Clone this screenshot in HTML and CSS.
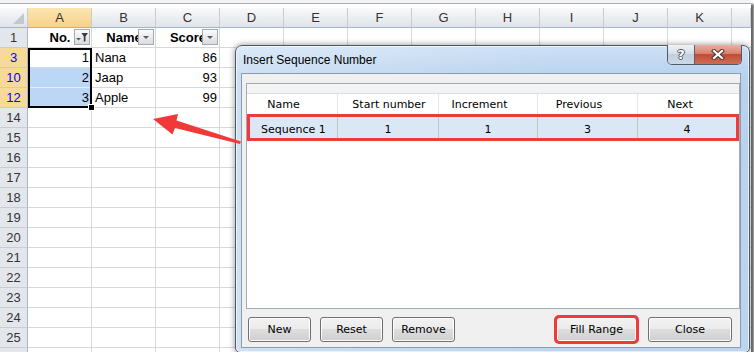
FILE: index.html
```html
<!DOCTYPE html>
<html lang="en">
<head>
    <meta charset="UTF-8">
    <title>Insert Sequence Number</title>
    <link rel="stylesheet" href="styles.css">
</head>
<body>
    <div class="screen">
        <div class="formula-edge"></div>

        <div class="col-heads">
            <div class="corner"></div>
            <div class="ch sel">A</div>
            <div class="ch">B</div>
            <div class="ch">C</div>
            <div class="ch">D</div>
            <div class="ch">E</div>
            <div class="ch">F</div>
            <div class="ch">G</div>
            <div class="ch">H</div>
            <div class="ch">I</div>
            <div class="ch">J</div>
            <div class="ch">K</div>
            <div class="ch"></div>
        </div>

        <div class="sheet">
            <div class="row-heads">
                <div class="rh">1</div>
                <div class="rh sel">3</div>
                <div class="rh sel">10</div>
                <div class="rh sel">12</div>
                <div class="rh">14</div>
                <div class="rh">15</div>
                <div class="rh">16</div>
                <div class="rh">17</div>
                <div class="rh">18</div>
                <div class="rh">19</div>
                <div class="rh">20</div>
                <div class="rh">21</div>
                <div class="rh">22</div>
                <div class="rh">23</div>
                <div class="rh">24</div>
                <div class="rh">25</div>
                <div class="rh">26</div>
            </div>

            <div class="cells">
                <div class="c head">No.
                    <span class="dd">
                        <svg width="14" height="14" viewBox="0 0 14 14">
                            <polygon points="1,8 6,8 3.5,10.5" fill="#5a5a5a"/>
                            <polygon points="6.5,3 13,3 10.5,6.5 10.5,11 8.8,12 8.8,6.5" fill="#3c3c3c"/>
                        </svg>
                    </span>
                </div>
                <div class="c head">Name
                    <span class="dd">
                        <svg width="14" height="14" viewBox="0 0 14 14">
                            <polygon points="4,6 10,6 7,9" fill="#5a5a5a"/>
                        </svg>
                    </span>
                </div>
                <div class="c head">Score
                    <span class="dd">
                        <svg width="14" height="14" viewBox="0 0 14 14">
                            <polygon points="4,6 10,6 7,9" fill="#5a5a5a"/>
                        </svg>
                    </span>
                </div>

                <div class="c num">1</div>
                <div class="c">Nana</div>
                <div class="c num">86</div>

                <div class="c num picked">2</div>
                <div class="c">Jaap</div>
                <div class="c num">93</div>

                <div class="c num picked">3</div>
                <div class="c">Apple</div>
                <div class="c num">99</div>

                <div class="range"><span class="handle"></span></div>
            </div>
        </div>

        <div class="dialog">
            <div class="titlebar">
                <span class="title">Insert Sequence Number</span>
                <div class="caption-btns">
                    <span class="cap help">?</span>
                    <span class="cap close">
                        <svg width="16" height="11" viewBox="0 0 16 11">
                            <path d="M4 2 L12 9 M12 2 L4 9" stroke="#4b3632" stroke-width="4.2" stroke-linecap="square"/>
                            <path d="M4 2 L12 9 M12 2 L4 9" stroke="#ffffff" stroke-width="2.2" stroke-linecap="square"/>
                        </svg>
                    </span>
                </div>
            </div>

            <div class="dlg-body">
                <div class="list">
                    <div class="list-top"></div>
                    <div class="lv-head">
                        <span>Name</span>
                        <span>Start number</span>
                        <span>Increment</span>
                        <span>Previous</span>
                        <span>Next</span>
                    </div>
                    <div class="lv-row">
                        <span>Sequence 1</span>
                        <span>1</span>
                        <span>1</span>
                        <span>3</span>
                        <span>4</span>
                    </div>
                </div>

                <div class="buttons">
                    <button type="button">New</button>
                    <button type="button">Reset</button>
                    <button type="button">Remove</button>
                    <button type="button" class="fill">Fill Range</button>
                    <button type="button" class="close-btn">Close</button>
                </div>
            </div>
        </div>

        <!-- red callout arrow pointing at the filled cells -->
        <svg class="arrow" width="95" height="40" viewBox="0 0 95 40">
            <polygon points="3,9 28,4 26.5,10.5 91,31.5 90,34 25,18 22.5,24.5" fill="#f1393a"/>
        </svg>
    </div>
</body>
</html>
```

FILE: styles.css
```css
* {
    box-sizing: border-box;
}

body {
    margin: 0;
    background: #ffffff;
    font-family: 'Liberation Sans', Arial, sans-serif;
    overflow: hidden;
}

.screen {
    position: relative;
    width: 751px;
    height: 352px;
    overflow: hidden;
    background: #ffffff;
    box-shadow: 3px 4px 2px 0 rgba(0, 0, 0, 0.6);
}

.formula-edge {
    height: 8px;
    background: linear-gradient(#f3f3f3 0, #f3f3f3 3px, #a9aeb5 3px, #a9aeb5 4px, #ffffff 4px);
}

/* column letters */
.col-heads {
    display: grid;
    grid-template-columns: 28px repeat(11, 64px) 1fr;
    height: 20px;
}

.ch,
.corner {
    border-right: 1px solid #c8cdd4;
    border-bottom: 1px solid #9eb6ce;
    background: linear-gradient(#f8f9fa, #e0e4e9);
    color: #333333;
    font-size: 13px;
    line-height: 19px;
    text-align: center;
}

.ch.sel {
    background: linear-gradient(#fbe5b0, #f7d289);
    border-bottom-color: #f2a53c;
}

.corner {
    position: relative;
}

.corner::after {
    content: '';
    position: absolute;
    right: 3px;
    bottom: 3px;
    border-style: solid;
    border-width: 0 0 11px 11px;
    border-color: transparent transparent #c3c8ce transparent;
}

/* grid body */
.sheet {
    display: grid;
    grid-template-columns: 28px 1fr;
    height: 324px;
    overflow: hidden;
}

.rh {
    height: 20px;
    border-right: 1px solid #a9b6c4;
    border-bottom: 1px solid #c8cdd4;
    background: #e3e7ec;
    color: #333333;
    font-size: 13px;
    line-height: 19px;
    text-align: center;
}

.rh.sel {
    background: #f8da98;
    color: #0000ff;
}

.cells {
    position: relative;
    display: grid;
    grid-template-columns: repeat(3, 64px);
    grid-auto-rows: 20px;
    align-content: start;
    background-image:
        linear-gradient(to right, #d8d8d8 1px, transparent 1px),
        linear-gradient(to bottom, #d8d8d8 1px, transparent 1px);
    background-size: 64px 20px;
    background-position: -1px -1px;
}

.c {
    position: relative;
    padding: 0 3px;
    font-size: 13px;
    line-height: 19px;
    white-space: nowrap;
    color: #000000;
}

.c.num {
    text-align: right;
}

.c.head {
    font-weight: bold;
    text-align: center;
}

.c.picked {
    background: #bcd6f6;
    box-shadow: inset -1px -1px 0 #e6eef8;
}

.dd {
    position: absolute;
    right: 2px;
    top: 1px;
    width: 16px;
    height: 16px;
    border: 1px solid #a5a9ae;
    background: linear-gradient(#fbfbfb, #d9dce0);
    display: flex;
    align-items: center;
    justify-content: center;
}

.range {
    position: absolute;
    left: 0;
    top: 20px;
    width: 64px;
    height: 60px;
    border: 2px solid #000000;
}

.handle {
    position: absolute;
    right: -5px;
    bottom: -5px;
    width: 7px;
    height: 7px;
    background: #000000;
    border: 1px solid #ffffff;
}

/* dialog window */
.dialog {
    position: absolute;
    left: 235px;
    top: 45px;
    width: 515px;
    height: 308px;
    display: flex;
    flex-direction: column;
    padding: 0 8px 4px 5px;
    border: 1px solid #4d5866;
    border-radius: 7px 7px 5px 5px;
    background:
        linear-gradient(to right, rgba(255, 255, 255, 0.3), rgba(255, 255, 255, 0) 65%),
        linear-gradient(#cde1f6, #b8d2ed 30px, #bcd4ee);
    box-shadow: inset 0 0 0 1px rgba(255, 255, 255, 0.6), 0 0 6px rgba(0, 0, 0, 0.45);
    font-family: 'DejaVu Sans', sans-serif;
    font-size: 11px;
    color: #000000;
}

.titlebar {
    height: 27px;
    display: flex;
    align-items: center;
}

.title {
    padding-left: 2px;
    font-family: 'Liberation Sans', Arial, sans-serif;
    font-size: 12px;
}

.caption-btns {
    margin-left: auto;
    margin-top: -1px;
    margin-right: -1px;
    align-self: flex-start;
    display: flex;
    height: 20px;
    border: 1px solid #4f5b69;
    border-top: none;
    border-radius: 0 0 5px 5px;
    overflow: hidden;
}

.cap {
    display: flex;
    align-items: center;
    justify-content: center;
}

.cap.help {
    width: 27px;
    border-right: 1px solid #56606c;
    background: linear-gradient(#eef2f7, #d6dfe9 45%, #c3cfdc 50%, #ccd8e5);
    color: #ffffff;
    font-weight: bold;
    font-size: 13px;
    text-shadow: 1px 0 0 #4b5563, -1px 0 0 #4b5563, 0 1px 0 #4b5563, 0 -1px 0 #4b5563;
}

.cap.close {
    width: 46px;
    background: linear-gradient(#eab0a2, #d9826f 45%, #c24c36 50%, #d06c55);
}

.dlg-body {
    flex: 1;
    display: flex;
    flex-direction: column;
    background: #f0f0f0;
    border: 1px solid #8a9cb0;
}

.list {
    height: 226px;
    margin: 9px 0 0 4px;
    border: 1px solid #a3abb5;
    background: #ffffff;
}

.list-top {
    height: 10px;
    background: #f4f4f4;
    border-bottom: 1px solid #dedede;
}

.lv-head {
    display: grid;
    grid-template-columns: 91px 101px 99px 100px 1fr;
    height: 20px;
}

.lv-head span {
    padding: 1px 17px 0 0;
    line-height: 19px;
    text-align: center;
    border-right: 1px solid #e6e6e6;
}

.lv-head span:nth-child(2) {
    padding: 1px 0 0 2px;
}

.lv-head span:last-child {
    border-right: none;
}

.lv-row {
    display: grid;
    grid-template-columns: 88px 101px 99px 100px 1fr;
    height: 27px;
    border: 3px solid #ef3a3a;
}

.lv-row span {
    padding-top: 4px;
    line-height: 17px;
    text-align: center;
    background: #dce7f6;
    border-right: 1px solid #c4c4c4;
}

.lv-row span:last-child {
    border-right: none;
}

.buttons {
    display: flex;
    gap: 9px;
    margin-top: 8px;
    padding: 0 8px 0 6px;
}

button {
    width: 63px;
    height: 25px;
    padding: 0;
    border: 1px solid #707070;
    border-radius: 3px;
    background: linear-gradient(#f2f2f2, #ebebeb 49%, #dddddd 50%, #cfcfcf);
    box-shadow: inset 0 0 0 1px #fbfbfb;
    font-family: 'DejaVu Sans', sans-serif;
    font-size: 11px;
    color: #000000;
}

button.fill {
    width: 81px;
    margin-left: auto;
    border-color: #3c7fb1;
    outline: 3px solid #ef3a3a;
    outline-offset: -1px;
}

button.close-btn {
    width: 84px;
    margin-left: 2px;
}

.arrow {
    position: absolute;
    left: 150px;
    top: 110px;
}
```
